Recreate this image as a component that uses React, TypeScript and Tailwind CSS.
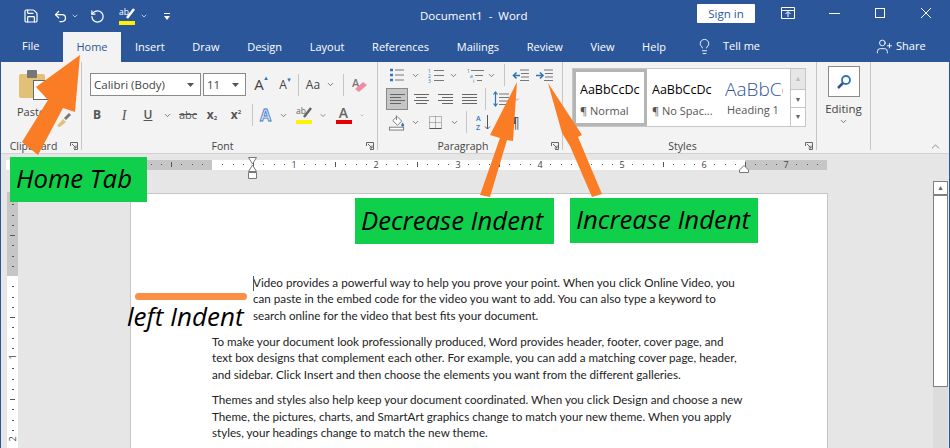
import React from 'react';
import { Save, Undo2, RotateCcw, ChevronDown, ChevronUp, Lightbulb, UserPlus } from 'lucide-react';

const tabs = ['Insert', 'Draw', 'Design', 'Layout', 'References', 'Mailings', 'Review', 'View', 'Help'];

const paragraphs = [
  {
    indent: 'pl-[122px]',
    lines: [
      'Video provides a powerful way to help you prove your point. When you click Online Video, you',
      'can paste in the embed code for the video you want to add. You can also type a keyword to',
      'search online for the video that best fits your document.',
    ],
  },
  {
    indent: 'pl-[81px]',
    lines: [
      'To make your document look professionally produced, Word provides header, footer, cover page, and',
      'text box designs that complement each other. For example, you can add a matching cover page, header,',
      'and sidebar. Click Insert and then choose the elements you want from the different galleries.',
    ],
  },
  {
    indent: 'pl-[81px]',
    lines: [
      'Themes and styles also help keep your document coordinated. When you click Design and choose a new',
      'Theme, the pictures, charts, and SmartArt graphics change to match your new theme. When you apply',
      'styles, your headings change to match the new theme.',
    ],
  },
];

const Cell = ({ className, children }: { className: string; children?: React.ReactNode }) => (
  <div className={`flex items-center justify-center shrink-0 ${className}`}>{children}</div>
);

const Sep = () => <span className="w-px h-[22px] bg-[#c6c6c6]" />;

const Chev = () => <ChevronDown size={9} strokeWidth={2} className="text-[#555]" />;

const Tri = () => (
  <svg width="7" height="4" viewBox="0 0 7 4" className="absolute right-[6px] top-[9px]">
    <path d="M0 0h7L3.500 4z" fill="#555" />
  </svg>
);

const Indent = ({ dir }: { dir: 'dec' | 'inc' }) => (
  <svg width="17" height="13" viewBox="0 0 17 13" fill="none">
    <path d="M8 1h9M9 4.500h8M9 8h8M8 11.500h9" stroke="#777" />
    {dir === 'dec' && <path d="M8 6.500H2M4.500 3.500l-3 3 3 3" stroke="#2f74b5" strokeWidth="1.600" />}
    {dir === 'inc' && <path d="M0 6.500h6M4 3.500l3 3-3 3" stroke="#2f74b5" strokeWidth="1.600" />}
  </svg>
);

const Bullets = () => (
  <svg width="14" height="14" viewBox="0 0 14 14" fill="none">
    <path d="M5 2h9M5 7h9M5 12h9" stroke="#777" />
    <path d="M0 2h3M0 7h3M0 12h3" stroke="#2f74b5" strokeWidth="2.500" />
  </svg>
);

const Numbered = () => (
  <svg width="16" height="15" viewBox="0 0 16 15" fill="none" className="overflow-visible">
    <path d="M6 2.500h10M6 7.500h10M6 12.500h10" stroke="#777" />
    <text x="0" y="4.500" fontSize="5" fill="#2f74b5">1</text>
    <text x="0" y="9.500" fontSize="5" fill="#2f74b5">2</text>
    <text x="0" y="14.500" fontSize="5" fill="#2f74b5">3</text>
  </svg>
);

const Multilevel = () => (
  <svg width="17" height="15" viewBox="0 0 17 15" fill="none" className="overflow-visible">
    <path d="M4 2.500h13M8 7.500h8M10 12.500h5" stroke="#777" />
    <text x="0" y="4.500" fontSize="5" fill="#2f74b5">1</text>
    <text x="3" y="9.500" fontSize="5" fill="#2f74b5">a</text>
    <text x="6" y="14.500" fontSize="5" fill="#2f74b5">i</text>
  </svg>
);

const Align = ({ d }: { d: string }) => (
  <svg width="15" height="11" viewBox="0 0 15 11" fill="none">
    <path d={d} stroke="#666" />
  </svg>
);

const LineSpacing = () => (
  <svg width="16" height="16" viewBox="0 0 16 16" fill="none">
    <path d="M6 3h10M6 6.500h10M6 10h10M6 13.500h10" stroke="#777" />
    <path d="M2.500 1v14M.5 3.500l2-2.500 2 2.500M.5 12.500l2 2.500 2-2.500" stroke="#2f74b5" strokeWidth="1.200" />
  </svg>
);

const Shading = () => (
  <svg width="17" height="17" viewBox="0 0 17 17" fill="none">
    <path d="M4 6.500 8.500 2l5 5-4.500 4.500z" fill="#fff" stroke="#777" />
    <path d="M8 1v5" stroke="#777" />
    <path d="M14.500 8.500c1 1.500 1.500 2 1.500 3a1 1 0 0 1-3 0c0-1 .5-1.500 1.500-3z" fill="#2f74b5" />
    <rect x=".5" y="13.500" width="15" height="3" fill="#fff" stroke="#777" />
  </svg>
);

const Borders = () => (
  <svg width="13" height="13" viewBox="0 0 13 13" fill="none">
    <path d="M.5.500h12v12H.5zM6.500.500v12M.5 6.500h12" stroke="#777" strokeDasharray="1 1" />
    <path d="M.5 12.500h12" stroke="#555" />
  </svg>
);

const Sort = () => (
  <svg width="15" height="16" viewBox="0 0 15 16" fill="none" className="overflow-visible">
    <text x="0" y="7" fontSize="7" fontWeight="600" fill="#2f74b5">A</text>
    <text x="0" y="15.500" fontSize="7" fontWeight="600" fill="#2f74b5">Z</text>
    <path d="M11.500 1v14M9 12.500l2.500 2.500 2.500-2.500" stroke="#555" />
  </svg>
);

const Highlight = ({ color }: { color: string }) => (
  <svg width="16" height="18" viewBox="0 0 16 18" fill="none" className="overflow-visible">
    <text x="0" y="8" fontSize="8.500" fill={color}>ab</text>
    <path d="M15 2 8 11" stroke={color} strokeWidth="2.500" />
    <rect y="14" width="16" height="4" fill="#fff200" />
  </svg>
);

const Launcher = () => (
  <svg width="8" height="8" viewBox="0 0 8 8" fill="none" className="absolute right-[3px] bottom-0">
    <path d="M.5 4V.5H7.500V7.500H4M2 2l4 4M6 3.500V6H3.500" stroke="#666" />
  </svg>
);

const Group = ({ label, className, children }: { label: string; className: string; children: React.ReactNode }) => (
  <div className={`relative h-full border-r border-[#c6c6c6] flex flex-col shrink-0 ${className}`}>
    <div className="flex-1 min-h-0">{children}</div>
    <div className="h-[10px] pr-[14px] text-center text-[10.500px] leading-[12px] text-[#444]">{label}</div>
    <Launcher />
  </div>
);

const Arrow = ({ d }: { d: string }) => (
  <svg width="950" height="448" viewBox="0 0 950 448" className="absolute inset-0 pointer-events-none">
    <path d={d} fill="#fa7d26" />
  </svg>
);

const Badge = ({ text, className }: { text: string; className: string }) => (
  <div className={`absolute bg-[#10cf4b] text-black italic flex items-center pl-[6px] whitespace-nowrap text-[25.700px] ${className}`}>
    {text}
  </div>
);

const Ruler = () => {
  const numbers = [1, 2, 3, 4, 5, 6, 7];
  return (
    <div className="relative h-[10px] ml-[130px] w-[697px] bg-white">
      <div className="absolute left-0 top-0 h-full w-[82px] bg-[#c6c6c6]" />
      <div className="absolute right-0 top-0 h-full w-[82px] bg-[#c6c6c6]" />
      {numbers.map((n) => (
        <span
          key={n}
          className="absolute top-[-2px] w-[10px] -ml-[5px] text-center text-[9px] leading-[14px] text-[#444]"
          style={{ left: `${82 + n * 82}px` }}
        >
          {n}
        </span>
      ))}
      <svg width="697" height="10" className="absolute inset-0">
        {Array.from({ length: 68 }).map((_, i) =>
          i % 8 === 0 ? null : (
            <rect key={i} x={Math.round((i * 82) / 8)} y={i % 4 === 0 ? 2 : 4} width="1" height={i % 4 === 0 ? 5 : 1} fill="#555" />
          ),
        )}
      </svg>
    </div>
  );
};

const VRuler = () => (
  <div className="absolute left-[7px] top-[-1px] w-[11px] h-[256px] bg-white">
    <div className="h-[84px] bg-[#c6c6c6]" />
    <span className="absolute left-0 w-[11px] top-[159px] text-center text-[9px] leading-[12px] text-[#444] -rotate-90">1</span>
    <span className="absolute left-0 w-[11px] top-[241px] text-center text-[9px] leading-[12px] text-[#444] -rotate-90">2</span>
    <svg width="11" height="256" className="absolute inset-0">
      {Array.from({ length: 32 }).map((_, i) =>
        i % 8 === 0 ? null : (
          <rect key={i} x={i % 4 === 0 ? 3 : 5} y={Math.round(2 + i * 10.25)} width={i % 4 === 0 ? 5 : 2} height="1" fill="#555" />
        ),
      )}
    </svg>
  </div>
);

export default function App() {
  return (
    <div className="relative w-[950px] h-[448px] overflow-hidden bg-[#e6e6e6] font-['Open_Sans',sans-serif]">
      {/* Title bar */}
      <div className="relative h-[32px] bg-[#2b579a] text-white flex items-center pl-[23px]">
        <Save size={16} strokeWidth={1.800} />
        <Undo2 size={15} strokeWidth={2} className="ml-[14px]" />
        <ChevronDown size={8} className="ml-[3px]" />
        <RotateCcw size={15} strokeWidth={2} className="ml-[11px]" />
        <div className="ml-[14px]">
          <Highlight color="#fff" />
        </div>
        <ChevronDown size={8} className="ml-[5px]" />
        <svg width="6" height="7" viewBox="0 0 6 7" className="ml-[16px]">
          <path d="M0 .5h6" stroke="#fff" />
          <path d="M0 3h6L3 7z" fill="#fff" />
        </svg>
        <div className="absolute left-[420px] top-[7px] text-[11.500px] leading-[18px]">Document1&nbsp; -&nbsp; Word</div>
        <div className="absolute left-[697px] top-[4px] w-[58px] h-[19px] bg-white rounded-[1px] text-[#2b579a] text-[11.500px] leading-[20px] text-center">Sign in</div>
        <svg width="14" height="12" viewBox="0 0 14 12" fill="none" stroke="white" className="absolute left-[781px] top-[7px]">
          <path d="M.5 3.500h13M.5.5h13v11H.5zM7 10V5M4.500 7 7 4.500 9.500 7" />
        </svg>
        <svg width="11" height="1" className="absolute left-[829px] top-[13px]">
          <rect width="11" height="1" fill="#fff" />
        </svg>
        <svg width="10" height="10" viewBox="0 0 10 10" fill="none" stroke="white" className="absolute left-[875px] top-[8px]">
          <rect x=".5" y=".5" width="9" height="9" />
        </svg>
        <svg width="10" height="10" viewBox="0 0 10 10" fill="none" stroke="white" className="absolute left-[921px] top-[8px]">
          <path d="m0 0 10 10M10 0 0 10" />
        </svg>
      </div>

      {/* Tabs */}
      <div className="relative h-[30px] bg-[#2b579a] text-white text-[11px] flex items-end">
        <div className="w-[63px] pl-[22px] h-[30px] leading-[28px]">File</div>
        <div className="w-[58px] h-[30px] bg-[#f3f3f3] text-[#2b579a] text-center leading-[30px]">Home</div>
        <div className="flex h-[30px] leading-[30px] ml-[14px] gap-[27.700px]">
          {tabs.map((t) => (
            <span key={t}>{t}</span>
          ))}
        </div>
        <Lightbulb size={17} strokeWidth={1.300} className="absolute left-[696px] top-[6px]" />
        <span className="absolute left-[723px] top-0 leading-[28px]">Tell me</span>
        <UserPlus size={17} strokeWidth={1.300} className="absolute left-[876px] top-[6px]" />
        <span className="absolute left-[896px] top-0 leading-[28px]">Share</span>
      </div>

      {/* Ribbon */}
      <div className="relative h-[92px] bg-[#f3f3f3] border-b border-[#d2d2d2] flex pb-[3px] text-[#444]">
        <Group label="Clipboard" className="w-[82px]">
          <div className="relative flex flex-col items-start pl-[17px]">
            <svg width="34" height="30" viewBox="0 0 34 30" className="mt-[8px]">
              <rect x="2" y="4" width="26" height="24" rx="2" fill="#e3c078" />
              <rect x="10" y="0" width="10" height="8" rx="1" fill="#777" />
              <rect x="16.500" y="10.500" width="16" height="19" fill="#fff" stroke="#666" />
            </svg>
            <span className="text-[11px] leading-[14px] mt-[5px]">Paste</span>
            <svg width="16" height="16" viewBox="0 0 16 16" className="absolute left-[56px] top-[50px]">
              <path d="M1 14 7 7l3 3-6 5z" fill="#e3c078" />
              <path d="m8 6 5-5 2 2-5 5z" fill="#777" />
            </svg>
          </div>
        </Group>
        <Group label="Font" className="w-[296px]">
          <div className="pl-[8px] pt-[11px] flex items-center h-[34px]">
            <div className="w-[111px] h-[23px] bg-white border border-[#8a8a8a] text-[11.500px] leading-[21px] pl-[3px] relative">
              Calibri (Body)
              <Tri />
            </div>
            <div className="ml-[2px] w-[43px] h-[23px] bg-white border border-[#8a8a8a] text-[11.500px] leading-[21px] pl-[3px] relative">
              11
              <Tri />
            </div>
            <Cell className="w-[26px] text-[15px] leading-none relative">
              A<span className="absolute right-[3px] top-[-2px] text-[6px] text-[#2f74b5]">▲</span>
            </Cell>
            <Cell className="w-[22px] text-[12px] leading-none relative">
              A<span className="absolute right-[2px] top-[-2px] text-[6px] text-[#2f74b5]">▼</span>
            </Cell>
            <Cell className="w-[8px]"><Sep /></Cell>
            <Cell className="w-[22px] text-[12px]">Aa</Cell>
            <Cell className="w-[12px]"><Chev /></Cell>
            <Cell className="w-[14px]"><Sep /></Cell>
            <Cell className="w-[18px]">
              <svg width="16" height="16" viewBox="0 0 16 16" className="overflow-visible">
                <text x="1" y="10" fontSize="11" fontWeight="600" fill="#777">A</text>
                <path d="m4 12 8-7 4 3-8 7z" fill="#f08ba5" />
              </svg>
            </Cell>
          </div>
          <div className="pl-[3px] mt-[8px] flex items-center h-[22px] text-[12px] text-[#555]">
            <Cell className="w-[24px] font-bold">B</Cell>
            <Cell className="w-[30px] italic font-['Liberation_Serif',serif] text-[14px]">I</Cell>
            <Cell className="w-[18px] underline font-semibold">U</Cell>
            <Cell className="w-[20px]"><Chev /></Cell>
            <Cell className="w-[22px] line-through text-[11px]">abc</Cell>
            <Cell className="w-[26px] font-bold">x<span className="text-[6px] mt-[6px]">2</span></Cell>
            <Cell className="w-[22px] font-bold">x<span className="text-[6px] mb-[6px]">2</span></Cell>
            <Cell className="w-[10px]"><Sep /></Cell>
            <Cell className="w-[20px]">
              <svg width="15" height="16" viewBox="0 0 15 16" className="overflow-visible">
                <text x="0" y="14" fontSize="16" fontWeight="700" fill="#d7e6f7" stroke="#3d78c6" strokeWidth=".8">A</text>
              </svg>
            </Cell>
            <Cell className="w-[12px]"><Chev /></Cell>
            <Cell className="w-[30px]"><Highlight color="#666" /></Cell>
            <Cell className="w-[8px]"><Chev /></Cell>
            <Cell className="w-[33px]">
              <div className="relative w-[16px] h-[18px] text-[14px] leading-[14px] text-center font-semibold text-[#666]">
                A
                <span className="absolute left-0 right-0 bottom-0 h-[4px] bg-[#e80000]" />
              </div>
            </Cell>
            <Cell className="w-[4px]"><Chev /></Cell>
          </div>
        </Group>
        <Group label="Paragraph" className="w-[185px]">
          <div className="pl-[12px] pt-[6px] flex items-center h-[20px]">
            <Cell className="w-[16px] justify-start"><Bullets /></Cell>
            <Cell className="w-[18px]"><Chev /></Cell>
            <Cell className="w-[20px] justify-end"><Numbered /></Cell>
            <Cell className="w-[18px]"><Chev /></Cell>
            <Cell className="w-[22px] justify-end"><Multilevel /></Cell>
            <Cell className="w-[14px]"><Chev /></Cell>
            <Cell className="w-[12px]"><Sep /></Cell>
            <Cell className="w-[20px]"><Indent dir="dec" /></Cell>
            <Cell className="w-[28px]"><Indent dir="inc" /></Cell>
          </div>
          <div className="pl-[8px] mt-[6px] flex items-center h-[22px]">
            <div className="w-[22px] h-[22px] bg-[#c6c6c6] border border-[#8a8a8a] flex items-center justify-center">
              <Align d="M0 .5h15M0 3.500h11M0 6.500h15M0 9.500h11" />
            </div>
            <Cell className="w-[26px]"><Align d="M0 .5h15M2 3.500h11M0 6.500h15M2 9.500h11" /></Cell>
            <Cell className="w-[22px]"><Align d="M0 .5h15M4 3.500h11M0 6.500h15M4 9.500h11" /></Cell>
            <Cell className="w-[26px]"><Align d="M0 .5h15M0 3.500h15M0 6.500h15M0 9.500h15" /></Cell>
            <Cell className="w-[6px]"><Sep /></Cell>
            <Cell className="w-[26px]"><LineSpacing /></Cell>
            <Cell className="w-[6px]"><Chev /></Cell>
          </div>
          <div className="pl-[11px] mt-[4px] flex items-center h-[16px]">
            <Cell className="w-[16px]"><Shading /></Cell>
            <Cell className="w-[20px]"><Chev /></Cell>
            <Cell className="w-[20px]"><Borders /></Cell>
            <Cell className="w-[18px]"><Chev /></Cell>
            <Cell className="w-[6px]"><Sep /></Cell>
            <Cell className="w-[28px]"><Sort /></Cell>
            <Cell className="w-[36px] text-[14px]">¶</Cell>
          </div>
        </Group>
        <Group label="Styles" className="w-[254px]">
          <div className="pl-[9px] pt-[6px]">
            <div className="flex w-[234px] h-[59px] bg-white border border-[#c6c6c6] relative">
              <div className="w-[74px] h-[57px] border-[3px] border-[#b5b5b5] pl-[4px] overflow-hidden shrink-0">
                <div className="text-[12.500px] leading-[16px] text-black mt-[10px] whitespace-nowrap overflow-hidden">AaBbCcDc</div>
                <div className="text-[11px] leading-[14px] mt-[6px] text-[#555]">¶ Normal</div>
              </div>
              <div className="w-[76px] pl-[5px] shrink-0">
                <div className="text-[12.500px] leading-[16px] w-[60px] text-black mt-[13px] whitespace-nowrap overflow-hidden">AaBbCcDc</div>
                <div className="text-[11px] leading-[14px] mt-[6px] whitespace-nowrap text-[#555]">¶ No Spac...</div>
              </div>
              <div className="pl-[2px] shrink-0">
                <div className="text-[19px] leading-[22px] font-light w-[58px] text-[#2f5496] mt-[9px] whitespace-nowrap overflow-hidden">AaBbCc</div>
                <div className="text-[11px] leading-[14px] mt-[3px] pl-[2px] whitespace-nowrap text-[#555]">Heading 1</div>
              </div>
              <div className="absolute right-0 top-0 w-[15px] h-full border-l border-[#c6c6c6] flex flex-col text-[7px] text-center text-[#666]">
                <span className="h-[20px] bg-[#e6e6e6] leading-[20px] text-[#bbb]">▲</span>
                <span className="h-[19px] leading-[19px] border-y border-[#c6c6c6]">▼</span>
                <span className="flex-1 leading-[18px]">▼</span>
              </div>
            </div>
          </div>
        </Group>
        <div className="w-[54px] h-full border-r border-[#c6c6c6] flex flex-col items-center pt-[4px] shrink-0">
          <div className="w-[32px] h-[31px] bg-white border border-[#8a8a8a] flex items-center justify-center">
            <svg width="14" height="14" viewBox="0 0 14 14" fill="none">
              <circle cx="9" cy="5" r="4" stroke="#2f74b5" strokeWidth="1.800" />
              <path d="M6 8 1 13" stroke="#2f5496" strokeWidth="2.500" />
            </svg>
          </div>
          <span className="text-[11.500px] leading-[16px] mt-[4px]">Editing</span>
          <Chev />
        </div>
        <ChevronUp size={13} strokeWidth={1.200} className="absolute left-[929px] top-[78px] text-[#555]" />
      </div>

      {/* Ruler */}
      <div className="relative h-[39px] pt-[6px]">
        <div className="absolute left-[6px] top-[6px] w-[11px] h-[10px] bg-white" />
        <Ruler />
        <svg width="11" height="22" viewBox="0 0 11 22" fill="#fff" stroke="#777" className="absolute left-[247px] top-[3px]">
          <path d="M1.500.5h8L5.500 7zM5.500 8l4 6.500h-8zM1.500 15.500h8v6h-8z" />
        </svg>
        <svg width="10" height="8" viewBox="0 0 10 8" fill="#fff" stroke="#777" className="absolute left-[739px] top-[11px]">
          <path d="M5 .5 9.500 5v2.500H.5V5z" />
        </svg>
      </div>

      {/* Page */}
      <div className="relative h-[255px]">
        <VRuler />
        <div className="relative ml-[130px] w-[698px] h-[300px] bg-white border border-[#c6c6c6] pt-[81px] font-['Lato',sans-serif] text-[11.650px] leading-[16.400px] text-[#222] whitespace-nowrap">
          <div className="absolute left-[122px] top-[82px] w-px h-[15px] bg-[#555]" />
          {paragraphs.map((p, i) => (
            <div key={i} className={`${p.indent} mb-[9.500px]`}>
              {p.lines.map((l) => (
                <div key={l}>{l}</div>
              ))}
            </div>
          ))}
        </div>
        <div className="absolute left-[933px] top-0 w-[15px] h-[255px] bg-[#dcdcdc]" />
        <div className="absolute left-[933px] top-[-12px] w-[15px] h-[206px] bg-white border border-[#808080]">
          <div className="h-[14px] border-b-2 border-[#808080] text-[7px] text-center leading-[12px] text-[#666]">▲</div>
        </div>
      </div>

      {/* Window edge */}
      <div className="absolute left-0 top-0 w-px h-full bg-[#2b579a]" />
      <div className="absolute right-0 top-0 w-px h-full bg-[#2b579a]" />

      {/* Annotations */}
      <Arrow d="M80 55 L 36 87 L 48 100 L 22 142 L 38 155 L 63 108 L 75 112 Z" />
      <Arrow d="M517 82 L 490 135 L 500 138 L 480 195 L 490 197 L 507 140 L 513 141 Z" />
      <Arrow d="M548 83 L 582 135 L 578 137 L 602 194 L 592 197 L 570 146 L 562 133 Z" />
      <Badge text="Home Tab" className="left-[10px] top-[157px] w-[137px] h-[45px]" />
      <Badge text="Decrease Indent" className="left-[355px] top-[198px] w-[199px] h-[46px]" />
      <Badge text="Increase Indent" className="left-[570px] top-[198px] w-[188px] h-[45px]" />
      <div className="absolute left-[135px] top-[293px] w-[112px] h-[7px] rounded-full bg-[#fb8f45]" />
      <div className="absolute left-[127px] top-[298px] italic text-[26px] leading-[36px] text-black">left Indent</div>
    </div>
  );
}
